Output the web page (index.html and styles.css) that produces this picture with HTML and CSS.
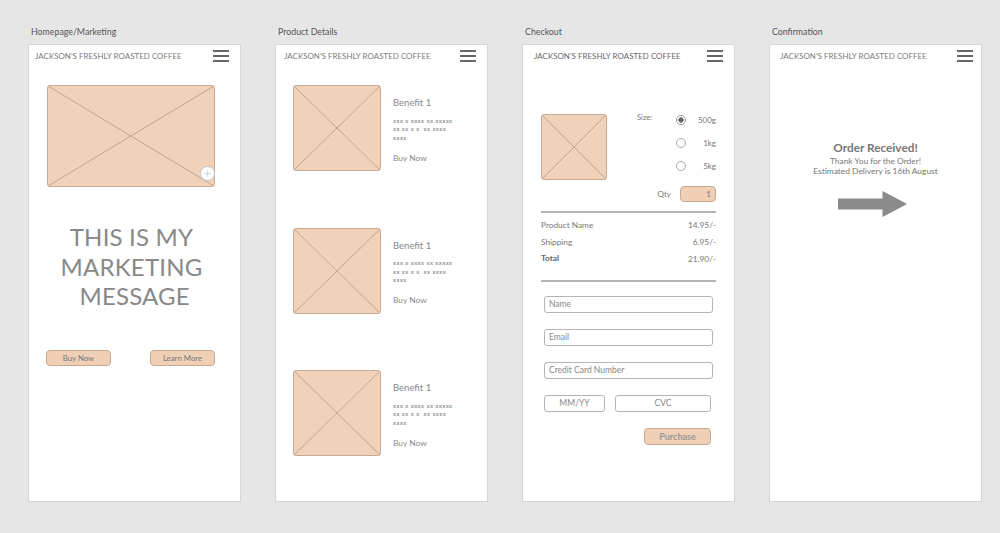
FILE: index.html
```html
<!DOCTYPE html>
<html>
<head>
<meta charset="utf-8">
<link rel="stylesheet" href="styles.css">
</head>
<body>
<div class="board">
  <!-- Homepage -->
  <section class="col">
    <div class="label">Homepage/Marketing</div>
    <div class="panel">
      <header class="hdr"><span class="title">JACKSON'S FRESHLY ROASTED COFFEE</span><span class="burger"><i></i><i></i><i></i></span></header>
      <div class="ph ph-hero">
        <svg class="x" viewBox="0 0 100 100" preserveAspectRatio="none"><line x1="0" y1="0" x2="100" y2="100"/><line x1="100" y1="0" x2="0" y2="100"/></svg>
        <span class="plus"><svg viewBox="0 0 14 14"><path d="M7 3.5v7M3.5 7h7"/></svg></span>
      </div>
      <div class="hero-msg">THIS IS MY<br>MARKETING<br>&nbsp;MESSAGE</div>
      <div class="hero-btns"><span class="btn">Buy Now</span><span class="btn">Learn More</span></div>
    </div>
  </section>

  <!-- Product Details -->
  <section class="col">
    <div class="label">Product Details</div>
    <div class="panel">
      <header class="hdr hdr-2"><span class="title">JACKSON'S FRESHLY ROASTED COFFEE</span><span class="burger"><i></i><i></i><i></i></span></header>
      <div class="plist">
        <div class="pitem">
          <div class="ph ph-sq"><svg class="x" viewBox="0 0 100 100" preserveAspectRatio="none"><line x1="0" y1="0" x2="100" y2="100"/><line x1="100" y1="0" x2="0" y2="100"/></svg></div>
          <div class="ptext"><div class="benefit">Benefit 1</div><div class="lorem"><span>xxx x xxxx xx xxxxx</span><span>xx xx x x &nbsp;xx xxxx</span><span>xxxx</span></div><div class="buy">Buy Now</div></div>
        </div>
        <div class="pitem">
          <div class="ph ph-sq"><svg class="x" viewBox="0 0 100 100" preserveAspectRatio="none"><line x1="0" y1="0" x2="100" y2="100"/><line x1="100" y1="0" x2="0" y2="100"/></svg></div>
          <div class="ptext"><div class="benefit">Benefit 1</div><div class="lorem"><span>xxx x xxxx xx xxxxx</span><span>xx xx x x &nbsp;xx xxxx</span><span>xxxx</span></div><div class="buy">Buy Now</div></div>
        </div>
        <div class="pitem">
          <div class="ph ph-sq"><svg class="x" viewBox="0 0 100 100" preserveAspectRatio="none"><line x1="0" y1="0" x2="100" y2="100"/><line x1="100" y1="0" x2="0" y2="100"/></svg></div>
          <div class="ptext"><div class="benefit">Benefit 1</div><div class="lorem"><span>xxx x xxxx xx xxxxx</span><span>xx xx x x &nbsp;xx xxxx</span><span>xxxx</span></div><div class="buy">Buy Now</div></div>
        </div>
      </div>
    </div>
  </section>

  <!-- Checkout -->
  <section class="col">
    <div class="label">Checkout</div>
    <div class="panel">
      <header class="hdr hdr-3"><span class="title">JACKSON'S FRESHLY ROASTED COFFEE</span><span class="burger"><i></i><i></i><i></i></span></header>
      <div class="co-top">
        <div class="ph ph-co"><svg class="x" viewBox="0 0 100 100" preserveAspectRatio="none"><line x1="0" y1="0" x2="100" y2="100"/><line x1="100" y1="0" x2="0" y2="100"/></svg></div>
        <div class="co-opts">
          <div class="opt-grid">
            <span></span><span class="size">Size:</span><span class="radio on"></span><span class="val">500g</span>
            <span></span><span></span><span class="radio"></span><span class="val">1kg</span>
            <span></span><span></span><span class="radio"></span><span class="val">5kg</span>
          </div>
          <div class="qty"><span>Qty</span><span class="qbox">1</span></div>
        </div>
      </div>
      <div class="rule"></div>
      <div class="sum">
        <div class="srow"><span>Product Name</span><span>14.95/-</span></div>
        <div class="srow"><span>Shipping</span><span>6.95/-</span></div>
        <div class="srow total"><span>Total</span><span>21.90/-</span></div>
      </div>
      <div class="rule rule-2"></div>
      <div class="form">
        <div class="field">Name</div>
        <div class="field">Email</div>
        <div class="field">Credit Card Number</div>
        <div class="frow"><div class="field f-mm">MM/YY</div><div class="field f-cvc">CVC</div></div>
        <div class="prow"><span class="btn btn-buy">Purchase</span></div>
      </div>
    </div>
  </section>

  <!-- Confirmation -->
  <section class="col">
    <div class="label">Confirmation</div>
    <div class="panel">
      <header class="hdr hdr-4"><span class="title">JACKSON'S FRESHLY ROASTED COFFEE</span><span class="burger"><i></i><i></i><i></i></span></header>
      <div class="conf">
        <div class="conf-h">Order Received!</div>
        <div class="conf-t">Thank You for the Order!<br>Estimated Delivery is 16th August</div>
      </div>
      <svg class="arrow" width="69" height="26" viewBox="0 0 69 26"><polygon points="0,7.5 44.5,7.5 44.5,0 69,13 44.5,26 44.5,18.5 0,18.5"/></svg>
    </div>
  </section>
</div>
</body>
</html>
```

FILE: styles.css
```css
* { box-sizing: border-box; }
html, body { margin: 0; padding: 0; }
body {
  width: 1000px;
  height: 533px;
  background: #e6e6e6;
  font-family: Lato, "Open Sans", "Liberation Sans", sans-serif;
  color: #777;
  overflow: hidden;
}
.board {
  display: flex;
  gap: 34px;
  padding-left: 28px;
  padding-top: 26px;
}
.col { width: 213px; }
.label {
  font-size: 8.8px;
  line-height: 12px;
  color: #555;
  padding-left: 3px;
  margin-bottom: 6px;
}
.panel {
  width: 213px;
  height: 458px;
  background: #fff;
  border: 1px solid #d6d6d6;
}
.hdr {
  height: 22px;
  display: flex;
  align-items: center;
  justify-content: space-between;
  padding: 0 11px 0 6px;
}
.hdr-2 { padding-left: 8px; }
.hdr-3 { padding-left: 11px; }
.hdr-3 .title { color: #666; }
.hdr-4 { padding-left: 10px; padding-right: 8px; }
.title {
  font-size: 7.9px;
  letter-spacing: 0.05px;
  color: #7a7a7a;
  white-space: nowrap;
}
.burger {
  width: 16px;
  display: flex;
  flex-direction: column;
  gap: 3.5px;
}
.burger i {
  display: block;
  height: 1.5px;
  background: #666;
}

/* placeholders */
.ph {
  position: relative;
  background: #f0d2ba;
  border: 1px solid #c9ab93;
  border-radius: 3px;
}
.ph .x {
  position: absolute;
  inset: 0;
  width: 100%;
  height: 100%;
}
.ph .x line {
  stroke: #b99a80;
  stroke-width: 0.8;
  vector-effect: non-scaling-stroke;
}
.ph-hero {
  width: 168px;
  height: 102px;
  margin: 18px 0 0 18px;
}
.plus {
  position: absolute;
  left: 152px;
  top: 80px;
  width: 15px;
  height: 15px;
  border-radius: 50%;
  background: #fff;
  border: 1px solid #c7c7c7;
}
.plus svg { display: block; width: 13px; height: 13px; }
.plus path { stroke: #c8c8c8; stroke-width: 0.8; fill: none; }

.hero-msg {
  margin-top: 35px;
  font-size: 24px;
  line-height: 29.5px;
  text-align: center;
  color: #888;
  padding-right: 6px;
  letter-spacing: 0.2px;
}
.hero-btns {
  margin-top: 39px;
  display: flex;
  justify-content: space-between;
  padding: 0 25px 0 17px;
}
.btn {
  width: 65px;
  height: 16px;
  display: flex;
  align-items: center;
  justify-content: center;
  background: #efd0b7;
  border: 1px solid #c7a991;
  border-radius: 4px;
  font-size: 7.8px;
  color: #777;
}

/* product list */
.plist { margin-top: 18px; }
.pitem {
  display: flex;
  gap: 12px;
  padding-left: 17px;
  height: 86px;
  margin-bottom: 56.5px;
}
.ph-sq { width: 88px; height: 86px; flex: none; }
.ptext { padding-top: 12px; }
.benefit { font-size: 9.5px; line-height: 12px; color: #888; }
.lorem {
  margin-top: 7.5px;
  font-size: 6px;
  letter-spacing: 0.45px;
  line-height: 8.5px;
  color: #777;
}
.lorem span { display: block; white-space: nowrap; }
.buy { margin-top: 10.5px; font-size: 8.4px; line-height: 10px; color: #888; }

/* checkout */
.co-top {
  display: flex;
  align-items: flex-start;
  margin-top: 41px;
  padding: 0 18px;
}
.ph-co { width: 66px; height: 66px; margin-top: 6px; flex: none; }
.co-opts { flex: 1; }
.opt-grid {
  display: grid;
  grid-template-columns: 30px 39px 10px 1fr;
  grid-auto-rows: 23px;
  align-items: center;
}
.size { font-size: 7.6px; color: #777; align-self: start; padding-top: 4px; }
.radio {
  width: 10px;
  height: 10px;
  border-radius: 50%;
  border: 1px solid #aaa;
  background: #fff;
}
.radio.on {
  background: radial-gradient(circle, #666 0 2.4px, #fff 2.9px);
  border-color: #999;
}
.val { text-align: right; font-size: 8px; color: #777; }
.qty {
  margin-top: 9px;
  display: flex;
  justify-content: flex-end;
  align-items: center;
  gap: 9px;
  font-size: 8px;
  color: #777;
}
.qbox {
  width: 36px;
  height: 16px;
  background: #efd0b7;
  border: 1px solid #c7a991;
  border-radius: 4px;
  text-align: right;
  padding-right: 4px;
  line-height: 14px;
}
.rule {
  margin: 9px 18px 0;
  height: 1.5px;
  background: #b4b4b4;
}
.rule-2 { margin-top: 12.5px; }
.sum { padding: 4px 18px 0; }
.srow {
  height: 17px;
  display: flex;
  justify-content: space-between;
  align-items: center;
  font-size: 8.3px;
  color: #777;
}
.srow.total span:first-child { font-weight: 700; color: #666; margin-top: -2px; }
.form { padding: 14.5px 21px 0 21px; }
.field {
  height: 17px;
  border: 1px solid #b5b5b5;
  border-radius: 3px;
  font-size: 8.5px;
  line-height: 15px;
  padding-left: 4px;
  color: #888;
  margin-bottom: 16px;
}
.frow { display: flex; gap: 10px; }
.f-mm { width: 61px; text-align: center; padding: 0; }
.f-cvc { width: 96px; text-align: center; padding: 0; }
.prow { display: flex; padding-left: 100px; }
.btn-buy { width: 67px; height: 17px; font-size: 9px; font-weight: 700; color: #999; }

/* confirmation */
.conf { margin-top: 74px; text-align: center; }
.conf-h { font-size: 11.8px; line-height: 14px; font-weight: 700; color: #777; }
.conf-t { margin-top: 1px; font-size: 8.4px; line-height: 10px; color: #777; }
.arrow { display: block; margin: 15px 0 0 68px; }
.arrow polygon { fill: #8a8a8a; }
```
